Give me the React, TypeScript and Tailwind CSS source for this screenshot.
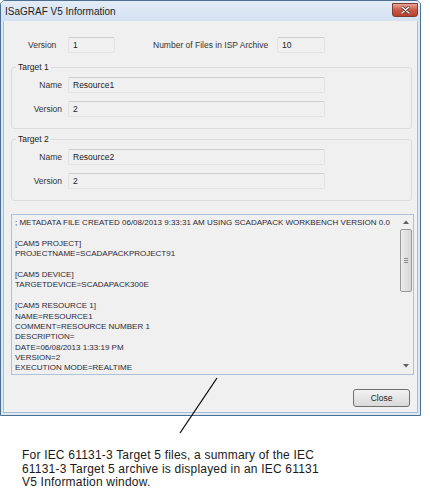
import React from 'react';

const metadata = [
  '; METADATA FILE CREATED 06/08/2013 9:33:31 AM USING SCADAPACK WORKBENCH VERSION 0.0',
  '',
  '[CAM5 PROJECT]',
  'PROJECTNAME=SCADAPACKPROJECT91',
  '',
  '[CAM5 DEVICE]',
  'TARGETDEVICE=SCADAPACK300E',
  '',
  '[CAM5 RESOURCE 1]',
  'NAME=RESOURCE1',
  'COMMENT=RESOURCE NUMBER 1',
  'DESCRIPTION=',
  'DATE=06/08/2013 1:33:19 PM',
  'VERSION=2',
  'EXECUTION MODE=REALTIME',
];

function Field({ value }: { value: string }) {
  return (
    <div className="h-[16px] rounded-[2px] border border-[#e3e3e3] border-t-[#cfcfcf] bg-[#f0f0f0] pl-[4px] flex items-center text-[8.5px] text-[#222]">
      {value}
    </div>
  );
}

function TargetGroup({ title, name, version, top }: { title: string; name: string; version: string; top: string }) {
  return (
    <div className={`relative ${top} ml-[7px] w-[401px] h-[62px] rounded-[3px] border border-[#dcdcdc]`}>
      <span className="absolute -top-[7px] left-[4px] bg-[#f0f0f0] px-[2px] text-[8.5px] leading-[12px] text-[#222]">
        {title}
      </span>
      <div className="mt-[9px] flex items-center">
        <span className="w-[50px] text-right text-[8.5px] text-[#333]">Name</span>
        <div className="ml-[6px] w-[257px]">
          <Field value={name} />
        </div>
      </div>
      <div className="mt-[8px] flex items-center">
        <span className="w-[50px] text-right text-[8.5px] text-[#333]">Version</span>
        <div className="ml-[6px] w-[257px]">
          <Field value={version} />
        </div>
      </div>
    </div>
  );
}

export default function App() {
  return (
    <div className="relative w-[430px] h-[499px] bg-white overflow-hidden font-['Liberation_Sans',Arial,sans-serif]">
      {/* Dialog window */}
      <div className="w-[421px] h-[416px] flex flex-col border border-[#4a6f93] rounded-t-[5px] bg-[#dce7f4]">
        {/* Title bar */}
        <div className="h-[20px] flex items-center justify-between pl-[4px] pr-[2px] bg-gradient-to-b from-[#e3ecf7] to-[#d3e1f1] rounded-t-[4px]">
          <span className="text-[10px] text-[#1e1e1e]">ISaGRAF V5 Information</span>
          <div className="w-[26px] h-[14px] mt-[-3px] rounded-b-[3px] border border-[#7e3a34] bg-gradient-to-b from-[#e8a493] via-[#c75a47] to-[#b83f2c] flex items-center justify-center">
            <svg width="9" height="8" viewBox="0 0 9 8">
              <path d="M1 1 L8 7 M8 1 L1 7" stroke="#3a1510" strokeWidth="2.6" strokeLinecap="round" />
              <path d="M1 1 L8 7 M8 1 L1 7" stroke="#ffffff" strokeWidth="1.6" strokeLinecap="round" />
            </svg>
          </div>
        </div>

        {/* Client area */}
        <div className="flex-1 mx-[2px] mb-[2px] bg-[#f0f0f0] border border-[#a9bdd3] border-t-0 flex flex-col text-[#222]">
          {/* Row 1 */}
          <div className="mt-[16px] flex items-center">
            <span className="ml-[24px] w-[40px] text-[8.5px] text-[#333]">Version</span>
            <div className="w-[47px]">
              <Field value="1" />
            </div>
            <span className="ml-[38px] w-[124px] text-[8.5px] text-[#333]">Number of Files in ISP Archive</span>
            <div className="w-[48px]">
              <Field value="10" />
            </div>
          </div>

          <TargetGroup title="Target 1" name="Resource1" version="2" top="mt-[14px]" />
          <TargetGroup title="Target 2" name="Resource2" version="2" top="mt-[10px]" />

          {/* Metadata text box */}
          <div className="mt-[13px] ml-[7px] w-[403px] h-[161px] border border-[#abc2d9] bg-[#f0f0f0] flex">
            <div className="flex-1 pl-[3px] pt-[3px] overflow-hidden">
              {metadata.map((line, i) => (
                <div key={i} className="h-[10.4px] leading-[10.4px] text-[8px] whitespace-nowrap text-[#2b2838]">
                  {line}
                </div>
              ))}
            </div>
            <div className="w-[15px] flex flex-col items-center bg-[#f0f0f0]">
              <div className="h-[14px] flex items-center justify-center">
                <svg width="6" height="4" viewBox="0 0 6 4">
                  <path d="M0 4 L3 0.5 L6 4 Z" fill="#606060" />
                </svg>
              </div>
              <div className="w-[12px] h-[63px] rounded-[2px] border border-[#9a9a9a] bg-gradient-to-r from-[#ececec] to-[#d6d6d6] flex flex-col items-center justify-center gap-[1px]">
                <div className="w-[4px] h-px bg-[#8a8a8a]" />
                <div className="w-[4px] h-px bg-[#8a8a8a]" />
                <div className="w-[4px] h-px bg-[#8a8a8a]" />
              </div>
              <div className="flex-1" />
              <div className="h-[17px] flex items-center justify-center">
                <svg width="6" height="4" viewBox="0 0 6 4">
                  <path d="M0 0 L3 3.5 L6 0 Z" fill="#606060" />
                </svg>
              </div>
            </div>
          </div>

          {/* Buttons */}
          <div className="mt-[14px] flex justify-end pr-[7px]">
            <button className="w-[57px] h-[18px] rounded-[3px] border border-[#707070] bg-gradient-to-b from-[#f2f2f2] to-[#d9d9d9] text-[8.5px] text-[#222]">
              Close
            </button>
          </div>
        </div>
      </div>

      {/* Caption */}
      <p className="ml-[22px] mt-[33px] text-[12px] leading-[13.5px] tracking-[0.2px] whitespace-nowrap text-[#1a1a1a]">
        For IEC 61131-3 Target 5 files, a summary of the IEC
        <br />
        61131-3 Target 5 archive is displayed in an IEC 61131
        <br />
        V5 Information window.
      </p>

      {/* Callout line */}
      <svg className="absolute left-0 top-0 pointer-events-none" width="430" height="499">
        <line x1="217" y1="378" x2="180" y2="433" stroke="#000" strokeWidth="1.2" />
      </svg>
    </div>
  );
}
